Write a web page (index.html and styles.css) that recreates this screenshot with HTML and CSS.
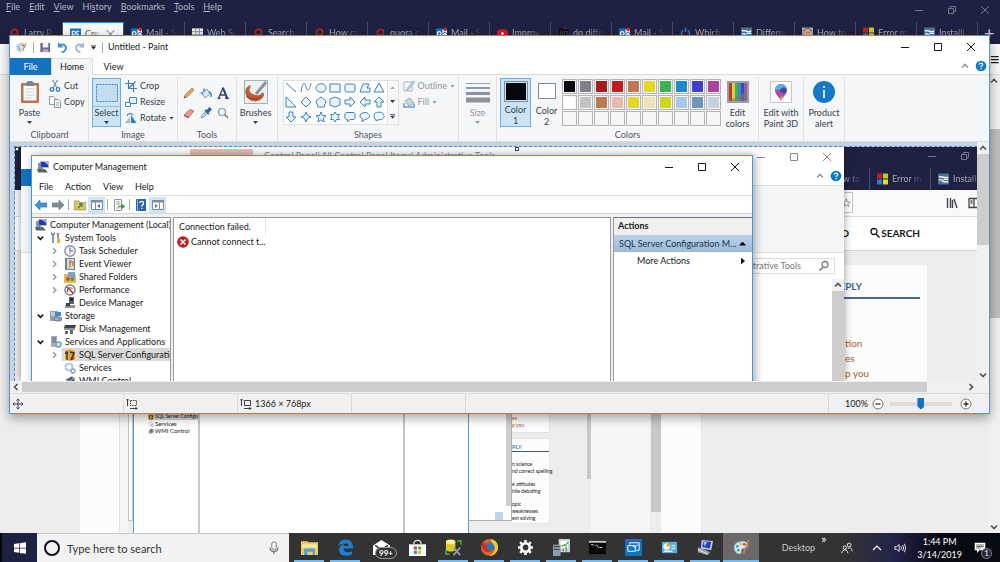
FILE: index.html
```html
<!DOCTYPE html>
<html lang="en">
<head>
  <meta charset="UTF-8" />
  <meta name="viewport" content="width=device-width, initial-scale=1.0"/>
  <title>Untitled - Paint</title>
  <link rel="stylesheet" href="styles.css">
</head>
<body>

<!-- Icon sprite -->
<svg class="sprite" aria-hidden="true">
  <symbol id="i-min" viewBox="0 0 12 12"><path d="M2 6.500h8" stroke="currentColor" fill="none"/></symbol>
  <symbol id="i-max" viewBox="0 0 12 12"><path d="M2.500 2.500h7v7h-7z" stroke="currentColor" fill="none"/></symbol>
  <symbol id="i-restore" viewBox="0 0 12 12"><path d="M2.500 4.500h5v5h-5zM4.500 4.500v-2h5v5h-2" stroke="currentColor" fill="none"/></symbol>
  <symbol id="i-close" viewBox="0 0 12 12"><path d="M2 2l8 8M10 2l-8 8" stroke="currentColor" fill="none"/></symbol>
  <symbol id="i-up" viewBox="0 0 12 12"><path d="M3 7.500l3-3 3 3" stroke="currentColor" stroke-width="1.600" fill="none"/></symbol>
  <symbol id="i-chevron" viewBox="0 0 12 12"><path d="M2 8l4-4 4 4" stroke="currentColor" stroke-width="1.200" fill="none"/></symbol>
  <symbol id="i-down" viewBox="0 0 12 12"><path d="M3 4.500l3 3 3-3" stroke="currentColor" stroke-width="1.600" fill="none"/></symbol>
  <symbol id="i-left" viewBox="0 0 12 12"><path d="M7.500 3l-3 3 3 3" stroke="currentColor" stroke-width="1.600" fill="none"/></symbol>
  <symbol id="i-right" viewBox="0 0 12 12"><path d="M4.500 3l3 3-3 3" stroke="currentColor" stroke-width="1.600" fill="none"/></symbol>
  <symbol id="i-help" viewBox="0 0 12 12"><circle cx="6" cy="6" r="5.300" fill="#1078c8"/><path d="M4.300 4.700C4.300 2.500 7.800 2.600 7.700 4.600 7.600 5.800 6 5.700 6 7.200M6 8.200v1.200" stroke="#fff" stroke-width="1.200" fill="none"/></symbol>
  <symbol id="i-q" viewBox="0 0 12 12"><circle cx="6" cy="5.500" r="3.500" stroke="#c8201e" stroke-width="1.600" fill="none"/><path d="M6 7l2.500 3.500" stroke="#c8201e" stroke-width="1.600"/></symbol>
  <symbol id="i-pe" viewBox="0 0 12 12"><path d="M0 0h12v12H0z" fill="#1578c4"/><path d="M2.500 10V3h2c2 0 2 3.200 0 3.200H2.500M10 3H7.500v7M7.500 6.300h2" stroke="#fff" stroke-width="1.200" fill="none"/></symbol>
  <symbol id="i-outlook" viewBox="0 0 12 12"><path d="M5 2h7v9H5z" fill="#dcecf8"/><path d="M0 1h7v11H0z" fill="#1272c0"/><circle cx="3.500" cy="6.500" r="2" stroke="#fff" stroke-width="1.200" fill="none"/><path d="M7 7l3-2 2 2M7 9h5" stroke="#1272c0" fill="none"/><circle cx="10" cy="2" r="2" fill="#d82020"/></symbol>
  <symbol id="i-sheet" viewBox="0 0 12 12"><path d="M0 1h12v11H0z" fill="#f0f0f4"/><path d="M4 1v11M8 1v11M0 4.500h12M0 8h12" stroke="#80829a"/></symbol>
  <symbol id="i-tube" viewBox="0 0 12 12"><rect y="2" width="12" height="9" rx="4" fill="#c81e1e"/><path d="M5 4.500l3 2-3 2z" fill="#fff"/></symbol>
  <symbol id="i-hq" viewBox="0 0 12 12"><path d="M1 1h10v11H1z" fill="#0b0b12"/><path d="M3 3v7M5 3v7M3 6h2M7 4h3v5H7z" stroke="#3c3c50" fill="none"/><path d="M6 1h4" stroke="#c02020"/></symbol>
  <symbol id="i-power" viewBox="0 0 12 12"><path d="M3.500 3a4.500 4.500 0 1 0 5 0M6 0v5" stroke="#2585cc" stroke-width="1.500" fill="none"/></symbol>
  <symbol id="i-swirl" viewBox="0 0 12 12"><path d="M0 0h12v12H0z" fill="#4d7399"/><path d="M1 4c4-2 5 2 10 0M1 7h3l2 2h5M6 6.500h5" stroke="#fff" stroke-width="1.400" fill="none"/></symbol>
  <symbol id="i-face" viewBox="0 0 12 12"><path d="M0 0h12v12H0z" fill="#a8a4a8"/><circle cx="6" cy="6" r="4" fill="#d8a088"/><path d="M2 4c1-4 7-4 8 0M4.500 5.500h1M7 5.500h1M4.500 8.500c1 1 2 1 3 0" stroke="#70442e" fill="none"/></symbol>
  <symbol id="i-blocks" viewBox="0 0 12 12"><path d="M0 0h5.500v5.500H0z" fill="#c81c1c"/><path d="M6.500 0H12v5.500H6.500z" fill="#b9cf20"/><path d="M0 6.500h5.500V12H0z" fill="#2080d0"/><path d="M6.500 6.500H12V12H6.500z" fill="#ecd722"/></symbol>
  <symbol id="i-palette" viewBox="0 0 16 16"><path d="M1 8c0-4 4-6 8-6 3 0 5 2 5 4s-2 3-4 3-2 1-2 2 0 3-2 3C3 14 1 11 1 8z" fill="#d8eaf6" stroke="#6fa0c4" stroke-width=".8"/><circle cx="4" cy="7" r="1.300" fill="#3f9ad8"/><circle cx="7" cy="4.500" r="1.300" fill="#e3b929"/><circle cx="10.500" cy="5" r="1.300" fill="#cf4a2c"/><circle cx="5" cy="10.500" r="1.300" fill="#44a860"/><path d="M15 1l-4 9-1 4" stroke="#c98648" stroke-width="1.400" fill="none"/></symbol>
  <symbol id="i-save" viewBox="0 0 12 12"><path d="M1 1h10v10H1z" fill="#66718e"/><path d="M3 1h6v5H3z" fill="#f4f4f8"/><path d="M3 8h6v3H3z" fill="#c8a0c0"/><path d="M1 1v10" stroke="#8d3f8a"/></symbol>
  <symbol id="i-undo" viewBox="0 0 12 12"><path d="M3.500 3.500c4-2 7 .5 6 4C9 9.500 7.500 11 5 11" stroke="#3c8dcf" stroke-width="2" fill="none"/><path d="M1 0v6h6z" fill="#3c8dcf"/></symbol>
  <symbol id="i-redo" viewBox="0 0 12 12"><path d="M8.500 3.500c-4-2-7 .5-6 4C3 9.500 4.500 11 7 11" stroke="#98b8d0" stroke-width="2" fill="none"/><path d="M11 0v6H5z" fill="#98b8d0"/></symbol>
  <symbol id="i-paste" viewBox="0 0 20 24"><rect x="1" y="3" width="18" height="20" rx="1" fill="#bd7449"/><path d="M3.500 5.500h13v15h-13z" fill="#fff"/><path d="M6 3l2-2h4l2 2v3H6z" fill="#7d8492"/><path d="M5.500 9h9M5.500 12h9M5.500 15h9M5.500 18h6" stroke="#bec8d6"/></symbol>
  <symbol id="i-cut" viewBox="0 0 12 12"><path d="M3.500 0l4.500 8M8.500 0L4 8" stroke="#8899ab" stroke-width="1.300"/><circle cx="3" cy="9.500" r="1.800" fill="none" stroke="#2f82c6" stroke-width="1.300"/><circle cx="9" cy="9.500" r="1.800" fill="none" stroke="#2f82c6" stroke-width="1.300"/></symbol>
  <symbol id="i-copy" viewBox="0 0 12 12"><path d="M.500.500h4l2 2v6h-6z" fill="#fff" stroke="#909aa8"/><path d="M5.500 3.500h4l2 2v6h-6z" fill="#fff" stroke="#8290a4"/><path d="M7 7h3M7 9h3" stroke="#78a6d0"/></symbol>
  <symbol id="i-select" viewBox="0 0 24 20"><path d="M1.500 1.500h21v17h-21z" fill="#c3dcf0" stroke="#3f86c2" stroke-dasharray="2 1"/></symbol>
  <symbol id="i-crop" viewBox="0 0 12 12"><path d="M3.500 0v8.500H12M0 3.500h8.500V12M3.500 8.500l7-7" stroke="#3d7fb8" stroke-width="1.200" fill="none"/></symbol>
  <symbol id="i-resize" viewBox="0 0 12 12"><path d="M4.500 1.500h7v6h-7z" fill="#e6f2fc" stroke="#3d84c0"/><path d="M.500 6.500h5v4h-5z" fill="#fff" stroke="#3d84c0"/></symbol>
  <symbol id="i-rotate" viewBox="0 0 12 12"><path d="M0 11l5-6v6z" fill="#a9b8c8"/><path d="M6 3l5.500 8H6z" fill="#2f7ebf"/><path d="M2 4c1-3 4-3 6-1" stroke="#3d84c0" stroke-width="1.200" fill="none"/></symbol>
  <symbol id="i-pencil" viewBox="0 0 12 12"><path d="M1 11l1-3 7-7 2 2-7 7z" fill="#e3ad5b" stroke="#9d6c32" stroke-width=".7"/><path d="M1 11l.500-1.500 1 1z" fill="#222"/></symbol>
  <symbol id="i-fill" viewBox="0 0 12 12"><path d="M2 6l5-4 3 5-5 4z" fill="#dbe6ef" stroke="#74889a" stroke-width=".8"/><path d="M4 5V1.500M9 5c2 0 2.500 2 2 5" stroke="#3c8fd0" stroke-width="1.500" fill="none"/><path d="M0 6l3-1v3z" fill="#3c8fd0"/></symbol>
  <symbol id="i-text" viewBox="0 0 12 12"><path d="M1.500 11.500L6 1l4.500 10.500M3.500 8h5M.500 11.500h3M8 11.500h4" stroke="#33425e" stroke-width="1.300" fill="none"/><path d="M6 1l4 10" stroke="#33425e" stroke-width="2"/></symbol>
  <symbol id="i-eraser" viewBox="0 0 12 12"><path d="M1 8l6-5.500 4 1.500-5 6z" fill="#e59a92" stroke="#a65c56" stroke-width=".7"/><path d="M1 8l5 2v1.500L1 9.500z" fill="#be5d57"/></symbol>
  <symbol id="i-picker" viewBox="0 0 12 12"><path d="M1 11l1-3 4-4 2 2-4 4z" fill="#b9d6ee" stroke="#6088aa" stroke-width=".7"/><path d="M5 3l4 4M6.500 4.500L9.500 1.500l1 1-3 3z" stroke="#2469a6" stroke-width="2"/></symbol>
  <symbol id="i-lens" viewBox="0 0 12 12"><circle cx="5" cy="5" r="3.500" fill="#eaf4fb" stroke="#8a98a6" stroke-width="1.200"/><path d="M7.500 7.500L11 11" stroke="#8d7466" stroke-width="1.600"/></symbol>
  <symbol id="i-brush" viewBox="0 0 24 24"><path d="M.500.500h23v23H.500z" fill="#eceff2" stroke="#a8aeb6"/><path d="M23 1L12 14" stroke="#7f93a8" stroke-width="3"/><path d="M20 1h3v3z" fill="#bfd4e6"/><path d="M7 5c-5 1-7 6-5 10 2 6 10 8 14 5 4-2 5-6 3-8-2 2-4 4-7 3-4-1-8-3-6-7z" fill="#b5623c"/><path d="M3 16c4 4 10 4 14 0" stroke="#c8281e" stroke-width="2" fill="none" stroke-dasharray="2 1"/></symbol>
  <symbol id="i-outline" viewBox="0 0 12 12"><path d="M1 2h8v9H1z" fill="none" stroke="#a9b8c7"/><path d="M3 10l7-9 2 1-7 8z" fill="#bcd0e2" stroke="#93a9bc" stroke-width=".7"/></symbol>
  <symbol id="i-bucket" viewBox="0 0 12 12"><path d="M2 5l5-3 4 5-5 3z" fill="#c9d8e6" stroke="#91a8bc"/><path d="M1 7v4h10V8" fill="none" stroke="#8fb1cf" stroke-width="2"/></symbol>
  <symbol id="i-lines" viewBox="0 0 24 22"><path d="M0 2.500h24" stroke="#8ea3b8"/><path d="M0 7h24" stroke="#8a9caf" stroke-width="2"/><path d="M0 12.500h24" stroke="#8b93a0" stroke-width="3"/><path d="M0 19h24" stroke="#8d939e" stroke-width="5"/></symbol>
  <symbol id="i-rainbow" viewBox="0 0 22 22"><path d="M0 0h22v22H0z" fill="#9a9fa6"/><path d="M2 2h3v18H2z" fill="#be3b32"/><path d="M5 2h3v18H5z" fill="#e5cf2e"/><path d="M8 2h3v18H8z" fill="#44b04f"/><path d="M11 2h3v18h-3z" fill="#2b8fd2"/><path d="M14 2h3v18h-3z" fill="#4546bd"/><path d="M17 2h3v18h-3z" fill="#a9529f"/><path d="M2 20c3-6 5 0 8-4s6-3 10-6v10z" fill="#7c7479" opacity=".6"/></symbol>
  <symbol id="i-paint3d" viewBox="0 0 22 22"><path d="M.500.500h21v21H.500z" fill="#fcfcfc" stroke="#c4c6ca"/><path d="M11 20C9 15 5 14 5 9a6 6 0 0 1 12 0c0 5-4 6-6 11z" fill="#b149a8"/><path d="M5 9a6 6 0 0 1 12 0c-3-3-5 2-8 0-2-1-3 1-4 0z" fill="#5aaee2"/><path d="M9 9l5-3 3 3-3 4z" fill="#394aa8"/><path d="M10 17l3-3-2 6z" fill="#e5b02c"/></symbol>
  <symbol id="i-info" viewBox="0 0 22 22"><circle cx="11" cy="11" r="11" fill="#1379c8"/><path d="M11 9v8M11 5v2" stroke="#fff" stroke-width="1.600"/></symbol>
  <symbol id="i-move" viewBox="0 0 12 12"><path d="M6 1v10M1 6h10M4.500 2.500L6 1l1.500 1.500M4.500 9.500L6 11l1.500-1.500M2.500 4.500L1 6l1.500 1.500M9.500 4.500L11 6 9.500 7.500" stroke="#3a4250" fill="none"/></symbol>
  <symbol id="i-sel-size" viewBox="0 0 12 12"><path d="M1.500 1v7M0 2.500L1.500 1 3 2.500M4 10.500h7M9.500 9l1.500 1.500L9.500 12" stroke="#3a4250" fill="none"/><path d="M4.500 2.500h6v5h-6z" stroke="#3a4250" stroke-dasharray="1.500 .8" fill="none"/></symbol>
  <symbol id="i-img-size" viewBox="0 0 12 12"><path d="M1.500 1v7M0 2.500L1.500 1 3 2.500M4 10.500h7M9.500 9l1.500 1.500L9.500 12M4.500 2.500h6v5h-6z" stroke="#3a4250" fill="none"/></symbol>
  <symbol id="i-minus" viewBox="0 0 12 12"><circle cx="6" cy="6" r="5" fill="#fafafa" stroke="#777"/><path d="M3.500 6h5" stroke="#333" stroke-width="1.300"/></symbol>
  <symbol id="i-plus" viewBox="0 0 12 12"><circle cx="6" cy="6" r="5" fill="#fafafa" stroke="#777"/><path d="M3.500 6h5M6 3.500v5" stroke="#333" stroke-width="1.300"/></symbol>

  <!-- Shape gallery -->
  <symbol id="s-line" viewBox="0 0 12 12"><path d="M1 1l10 9"/></symbol>
  <symbol id="s-curve" viewBox="0 0 12 12"><path d="M1 10c2-12 4-9 5-5s3 5 5-4" fill="none"/></symbol>
  <symbol id="s-oval" viewBox="0 0 12 12"><ellipse cx="6" cy="6" rx="5" ry="4.300"/></symbol>
  <symbol id="s-rect" viewBox="0 0 12 12"><path d="M1 2h10v8H1z"/></symbol>
  <symbol id="s-round" viewBox="0 0 12 12"><rect x="1" y="2" width="10" height="8" rx="2"/></symbol>
  <symbol id="s-poly" viewBox="0 0 12 12"><path d="M1 10l3-8h6L8 6h3v4z"/></symbol>
  <symbol id="s-tri" viewBox="0 0 12 12"><path d="M6 1l5 9H1z"/></symbol>
  <symbol id="s-rtri" viewBox="0 0 12 12"><path d="M1 1l10 10H1z"/></symbol>
  <symbol id="s-diamond" viewBox="0 0 12 12"><path d="M6 1l5 5-5 5-5-5z"/></symbol>
  <symbol id="s-pent" viewBox="0 0 12 12"><path d="M6 1l5 4-2 6H3L1 5z"/></symbol>
  <symbol id="s-hex" viewBox="0 0 12 12"><path d="M6 1l5 2v6l-5 2-5-2V3z"/></symbol>
  <symbol id="s-right" viewBox="0 0 12 12"><path d="M1 4h5V1l5 5-5 5V8H1z"/></symbol>
  <symbol id="s-left" viewBox="0 0 12 12"><path d="M11 4H6V1L1 6l5 5V8h5z"/></symbol>
  <symbol id="s-up" viewBox="0 0 12 12"><path d="M4 11V6H1l5-5 5 5H8v5z"/></symbol>
  <symbol id="s-down" viewBox="0 0 12 12"><path d="M4 1v5H1l5 5 5-5H8V1z"/></symbol>
  <symbol id="s-star4" viewBox="0 0 12 12"><path d="M6 1l1.500 3.500L11 6 7.500 7.500 6 11 4.500 7.500 1 6l3.500-1.500z"/></symbol>
  <symbol id="s-star5" viewBox="0 0 12 12"><path d="M6 1l1.400 3.500L11 4.700 8.300 7l.9 4L6 8.800 2.800 11l.9-4L1 4.700l3.600-.2z"/></symbol>
  <symbol id="s-star6" viewBox="0 0 12 12"><path d="M6 1l1.500 2.500h3L9 6l1.500 2.500h-3L6 11 4.500 8.500h-3L3 6 1.500 3.500h3z"/></symbol>
  <symbol id="s-call1" viewBox="0 0 12 12"><path d="M2 1.500h8l1 1v5l-1 1H6L3.500 11V8.500H2l-1-1v-5z"/></symbol>
  <symbol id="s-call2" viewBox="0 0 12 12"><path d="M3 11l.500-3C-1 6 1 1.500 6 1.500S13 7.500 6 8.500z"/></symbol>
  <symbol id="s-call3" viewBox="0 0 12 12"><path d="M3 2c1-1 3-1 3-.5C8 .5 10 2 10 3c2 2 1 4-.5 4.500C9 9 7 9 6 8.500L3 10V8.500C1 8 .500 6 1.500 5 .500 4 1 2 3 2z"/></symbol>

  <!-- Computer Management icons -->
  <symbol id="c-mgmt" viewBox="0 0 12 12"><path d="M3 0h9v7H3z" fill="#aeb8c4"/><path d="M4 1h7v5H4z" fill="#2536b8"/><path d="M7 1h4v3z" fill="#8db2ea"/><path d="M1 2h3v6H1z" fill="#88949f"/><path d="M0 8h8l3 3.500H1z" fill="#59626d"/><path d="M4 6l2 3" stroke="#47a06c" stroke-width="1.500"/></symbol>
  <symbol id="c-tools" viewBox="0 0 12 12"><path d="M3 1v10M8 1v5" stroke="#8998a6" stroke-width="2"/><path d="M1.500 0v3h3V0M6.500 1.500h3" stroke="#8998a6" fill="none"/><path d="M8.500 6v5" stroke="#dfb62e" stroke-width="3"/></symbol>
  <symbol id="c-clock" viewBox="0 0 12 12"><circle cx="6" cy="6" r="5.200" fill="#eef4f9" stroke="#8c929a" stroke-width="1.400"/><path d="M6 2.500V6h3" stroke="#426a94" fill="none"/><path d="M6 6v3.500" stroke="#cc9d56"/></symbol>
  <symbol id="c-event" viewBox="0 0 12 12"><path d="M1 0h10v12H1z" fill="#5f83a9"/><path d="M3 1h7v10H3z" fill="#cfdeea"/><path d="M6 9V3l3 1v4" stroke="#cb792a" stroke-width="1.500" fill="none"/><circle cx="5.500" cy="9" r="1.400" fill="#e5b634"/></symbol>
  <symbol id="c-folder" viewBox="0 0 12 12"><path d="M0 3h5l1 1h6v8H0z" fill="#e2bb4e"/><path d="M4 1h7v5H4z" fill="#7da2cc"/><circle cx="4" cy="8" r="2" fill="#bb5237"/><circle cx="8.500" cy="8" r="2" fill="#4b9a57"/></symbol>
  <symbol id="c-perf" viewBox="0 0 12 12"><circle cx="6" cy="6" r="5" fill="#fff" stroke="#7c838a" stroke-width="1.500"/><path d="M3 3l6 6" stroke="#c8241e" stroke-width="1.600"/><path d="M3.500 8c-1-3 3-6 5-3" stroke="#444" fill="none"/></symbol>
  <symbol id="c-device" viewBox="0 0 12 12"><path d="M5 0h5v7H5z" fill="#59636f"/><path d="M6 1h3v3H6z" fill="#232c3c"/><path d="M1 8h10v3H1z" fill="#8b939c"/><path d="M2 6h4v3H2z" fill="#3a4350"/></symbol>
  <symbol id="c-storage" viewBox="0 0 12 12"><path d="M0 1h8v10H0z" fill="#91a0ae"/><path d="M1 3h5M1 5h5" stroke="#eef2f5"/><path d="M5 2h6v4H5z" fill="#3c8cc8"/><ellipse cx="8" cy="9" rx="4" ry="2" fill="#a9b9c5" stroke="#617584"/><circle cx="9" cy="9" r="1" fill="#48a958"/></symbol>
  <symbol id="c-disk" viewBox="0 0 12 12"><path d="M1 2h11l-1 3H0z" fill="#3c434c"/><path d="M0 5h11v2H0z" fill="#8a929a"/><path d="M1 8h3v3H1zM6 7h3v4H6z" fill="#636c76"/></symbol>
  <symbol id="c-server" viewBox="0 0 12 12"><path d="M1 0h6v11H1z" fill="#a4b0bb"/><path d="M2 2h4M2 4h4M2 6h4" stroke="#5f6c79"/><circle cx="8.500" cy="8.500" r="2.500" fill="#dceaf4" stroke="#6c9cc4" stroke-width="1.400"/></symbol>
  <symbol id="c-sql" viewBox="0 0 12 12"><path d="M1 2l5-2 5 2v8l-5 2-5-2z" fill="#e3ac28"/><path d="M3 2v9M1 4h3" stroke="#32343c" stroke-width="1.300"/><path d="M6 3l4 1-3 7" stroke="#282b35" stroke-width="1.600" fill="none"/><path d="M9 6v5" stroke="#b62b22" stroke-width="1.600"/></symbol>
  <symbol id="c-gear" viewBox="0 0 12 12"><circle cx="5" cy="5" r="3.500" fill="none" stroke="#9ab9d2" stroke-width="2" stroke-dasharray="2 .6"/><circle cx="9" cy="9" r="2" fill="none" stroke="#80aacb" stroke-width="1.500"/></symbol>
  <symbol id="c-wmi" viewBox="0 0 12 12"><path d="M2 4l6-3 3 2v6l-6 3-4-3z" fill="#9099a3"/><path d="M4 5l4-2M5 8l5-3" stroke="#444d58" stroke-width="1.500"/></symbol>
  <symbol id="c-back" viewBox="0 0 12 12"><path d="M0 6l5-5v3h7v4H5v3z" fill="#3e97d8" stroke="#28689e" stroke-width=".6"/></symbol>
  <symbol id="c-fwd" viewBox="0 0 12 12"><path d="M12 6L7 1v3H0v4h7v3z" fill="#858c94" stroke="#6c7278" stroke-width=".6"/></symbol>
  <symbol id="c-upfolder" viewBox="0 0 12 12"><path d="M0 2h5l1 1.500h6V11H0z" fill="#dfc36a" stroke="#9c8848" stroke-width=".7"/><path d="M4 9l4-4M5 5h3v3" stroke="#38913e" stroke-width="1.300" fill="none"/></symbol>
  <symbol id="c-pane" viewBox="0 0 12 12"><path d="M.500 1.500h11v9H.500z" fill="#fff" stroke="#7e8ca0"/><path d="M0 2.500h12" stroke="#7e8ca0" stroke-width="2"/><path d="M4.500 3v7" stroke="#7e8ca0"/><path d="M9 5v4L6 7z" fill="#4c6c9c"/></symbol>
  <symbol id="c-pane2" viewBox="0 0 12 12"><path d="M.500 1.500h11v9H.500z" fill="#fff" stroke="#7e8ca0"/><path d="M0 2.500h12" stroke="#7e8ca0" stroke-width="2"/><path d="M7.500 3v7" stroke="#7e8ca0"/><path d="M3 5v4l3-2z" fill="#329b42"/></symbol>
  <symbol id="c-export" viewBox="0 0 12 12"><path d="M1.500.500h7v11h-7z" fill="#fff" stroke="#9097a0"/><path d="M3 3h4M3 5h4M3 9h3" stroke="#98a0aa"/><path d="M5 7.500h5M8.500 5.500l2.500 2-2.500 2" stroke="#3c9c40" stroke-width="1.500" fill="none"/></symbol>
  <symbol id="c-book" viewBox="0 0 12 12"><path d="M1 0h10v12H1z" fill="#2a62ac"/><path d="M2.500 0v12" stroke="#8fb2dc"/><path d="M4.800 4C5 1.500 9 2 8.500 4.300 8.300 5.800 6.800 5.600 6.800 7.500M6.800 8.700v1.300" stroke="#fff" stroke-width="1.300" fill="none"/></symbol>
  <symbol id="c-error" viewBox="0 0 12 12"><circle cx="6" cy="6" r="5.800" fill="#bd1f1c"/><path d="M3.500 3.500l5 5M8.500 3.500l-5 5" stroke="#fff" stroke-width="1.600"/></symbol>
  <symbol id="c-find" viewBox="0 0 12 12"><circle cx="7" cy="4.500" r="3" fill="none" stroke="currentColor" stroke-width="1.300"/><path d="M5 7l-3.500 3.500" stroke="currentColor" stroke-width="1.600"/></symbol>

  <!-- Taskbar icons -->
  <symbol id="t-win" viewBox="0 0 12 12"><path d="M0 2l5-.7v4.400H0zM5.700 1.200L12 .3v5.400H5.700zM0 6.400h5v4.400L0 10zM5.700 6.400H12v5.400l-6.300-.9z" fill="#fff"/></symbol>
  <symbol id="t-mic" viewBox="0 0 12 16"><rect x="3.500" y="1" width="5" height="9" rx="2.500" fill="#fff" stroke="#666"/><path d="M1.500 7.500c0 6 9 6 9 0M6 12v3" fill="none" stroke="#666" stroke-width="1.300"/></symbol>
  <symbol id="t-explorer" viewBox="0 0 16 16"><path d="M0 2h6l1 1h9v12H0z" fill="#edcb65"/><path d="M1 5h14v3H1z" fill="#fae8a4"/><path d="M3 15V9h10v6h-2v-3H6v3z" fill="#4b9fdb"/></symbol>
  <symbol id="t-edge" viewBox="0 0 16 16"><path d="M1 7C2 2 5 .500 8.500.500 13 .500 15 4 15 7v2H6c.2 4 5 4 8 2.500v3C8 17 1.500 15.500 2 10c.2-3 3-5.500 5-6-3 .3-5 1.500-6 3zm5-.500h5C10.800 3.200 6.500 3.200 6 6.500z" fill="#1b80d0"/></symbol>
  <symbol id="t-mail" viewBox="0 0 16 16"><path d="M0 6l8-5 8 5v9H0z" fill="#fff"/><path d="M2 6l6 4 6-4" stroke="#333" stroke-width="1.500" fill="none"/></symbol>
  <symbol id="t-store" viewBox="0 0 16 16"><path d="M0 5h16v11H0z" fill="#fff"/><path d="M4.500 5c0-5 7-5 7 0" fill="none" stroke="#ddd" stroke-width="1.300"/><path d="M4.500 7h3v3h-3z" fill="#d9412a"/><path d="M8.500 7h3v3h-3z" fill="#66ac36"/><path d="M4.500 11h3v3h-3z" fill="#2a90cf"/><path d="M8.500 11h3v3h-3z" fill="#e5b52a"/></symbol>
  <symbol id="t-sqlcfg" viewBox="0 0 18 18"><path d="M1 3v8c0 3 10 3 10 0V3z" fill="#e2c928"/><ellipse cx="6" cy="3" rx="5" ry="2.500" fill="#fff1a0"/><path d="M13 2h4v4M1 12v4h4" fill="none" stroke="#48a33c" stroke-width="1.800"/><path d="M9 9l7 8M16 9l-7 8" stroke="#9a9a9a" stroke-width="2"/></symbol>
  <symbol id="t-firefox" viewBox="0 0 16 16"><circle cx="8" cy="8" r="8" fill="#e0622a"/><path d="M9 0c5 1 7 4 7 8s-4 8-8 8c4-3 6-5 5-8-.5-3-3-3-4-8z" fill="#efd22e"/><circle cx="8.500" cy="7" r="4" fill="#2879bd"/><path d="M1 5c0 7 5 9 9 6-4 0-5-2-4-4L3 3z" fill="#c93025"/></symbol>
  <symbol id="t-gear" viewBox="0 0 16 16"><circle cx="8" cy="8" r="4" fill="none" stroke="#fff" stroke-width="2.500"/><path d="M8 1v2M8 13v2M1 8h2M13 8h2M3 3l1.500 1.500M11.500 11.500L13 13M3 13l1.500-1.500M11.500 4.500L13 3" stroke="#fff" stroke-width="2.400"/></symbol>
  <symbol id="t-server" viewBox="0 0 18 18"><path d="M6 0h12v14H6z" fill="#ccd2d8"/><path d="M8 2h8v8H8z" fill="#fff"/><path d="M9 8l3-2 1 1 3-4M11 10v3M14 8v5" stroke="#38a34b" stroke-width="1.300" fill="none"/><path d="M0 6h8v12H0z" fill="#909aa5"/><path d="M1 8h6M1 11h6" stroke="#333"/></symbol>
  <symbol id="t-cmd" viewBox="0 0 18 14"><path d="M0 0h18v14H0z" fill="#080808"/><path d="M0 1h18" stroke="#c6c9cc" stroke-width="2"/><path d="M2 4h3M6 5h1M8 4l2 3M11 7h3" stroke="#ddd"/></symbol>
  <symbol id="t-blue" viewBox="0 0 18 18"><path d="M0 0h18v18H0z" fill="#0f74c0"/><path d="M5 6V4h10v8h-3M3 7h8v6H3z" fill="none" stroke="#fff"/><path d="M8 7l2 2 4-3" fill="none" stroke="#fff"/></symbol>
  <symbol id="t-panel" viewBox="0 0 18 14"><path d="M1 1h16v12H1z" fill="#57aee0"/><circle cx="6" cy="6" r="3.500" fill="#fff"/><path d="M6 6V2.500A3.500 3.500 0 0 1 9.500 6z" fill="#e3a42e"/><path d="M11 5h4M11 8h4M3 11h9" stroke="#e8f5ff" stroke-width="1.400"/></symbol>
  <symbol id="t-pc" viewBox="0 0 18 18"><path d="M5 1l12 1-2 10-11-2z" fill="#bfcad5"/><path d="M7 2.500l8 .5-1.500 7-8-1.500z" fill="#253fc4"/><path d="M7 3l4 0-3 5z" fill="#a1c4ef"/><path d="M1 9l4 1 9 4-3 3-10-3z" fill="#99a5b3"/><path d="M1 11l10 5" stroke="#e5eaf0"/></symbol>
  <symbol id="t-people" viewBox="0 0 14 14"><circle cx="9.500" cy="3.500" r="2.200" fill="none" stroke="#fff"/><circle cx="4.500" cy="6.500" r="2" fill="none" stroke="#fff"/><path d="M1 13c0-5 7-5 7 0M8 8c3-3 5 0 5 3" fill="none" stroke="#fff"/></symbol>
  <symbol id="t-sound" viewBox="0 0 14 12"><path d="M1 4.500h2L6 2v8L3 7.500H1z" fill="none" stroke="#fff"/><path d="M8 4q1.500 2 0 4M10 2.500q2.500 3.500 0 7M12 1q3.500 5 0 10" stroke="#fff" fill="none"/></symbol>
  <symbol id="t-note" viewBox="0 0 16 16"><path d="M1 1h14v10H7l-3 4v-4H1z" fill="#fff"/><path d="M3 4h10M3 6h10M3 8h6" stroke="#333"/></symbol>
</svg>

<!-- Desktop -->
<main class="desktop">

  <!-- Firefox in the background -->
  <section class="browser">
    <div class="browser-menu">
      <nav>
        <a href="#"><u>F</u>ile</a><a href="#"><u>E</u>dit</a><a href="#"><u>V</u>iew</a><a href="#">Hi<u>s</u>tory</a><a href="#"><u>B</u>ookmarks</a><a href="#"><u>T</u>ools</a><a href="#"><u>H</u>elp</a>
      </nav>
      <div class="browser-controls">
        <svg><use href="#i-min"/></svg><svg><use href="#i-restore"/></svg><svg><use href="#i-close"/></svg>
      </div>
    </div>
    <div class="tabs">
      <a class="tab" href="#"><svg><use href="#i-q"/></svg><span>Larry P</span></a>
      <a class="tab active" href="#"><svg><use href="#i-pe"/></svg><span>Creat</span><svg class="tab-x"><use href="#i-close"/></svg></a>
      <a class="tab" href="#"><svg><use href="#i-outlook"/></svg><span>Mail - S</span></a>
      <a class="tab" href="#"><svg><use href="#i-sheet"/></svg><span>Web Sc</span></a>
      <a class="tab" href="#"><svg><use href="#i-q"/></svg><span>Search</span></a>
      <a class="tab" href="#"><svg><use href="#i-q"/></svg><span>How ca</span></a>
      <a class="tab" href="#"><svg><use href="#i-q"/></svg><span>quora c</span></a>
      <a class="tab" href="#"><svg><use href="#i-outlook"/></svg><span>Mail - S</span></a>
      <a class="tab" href="#"><svg><use href="#i-tube"/></svg><span>Improv</span></a>
      <a class="tab" href="#"><svg><use href="#i-hq"/></svg><span>dq diffe</span></a>
      <a class="tab" href="#"><svg><use href="#i-outlook"/></svg><span>Mail - S</span></a>
      <a class="tab" href="#"><svg><use href="#i-power"/></svg><span>Which</span></a>
      <a class="tab" href="#"><svg><use href="#i-swirl"/></svg><span>Differen</span></a>
      <a class="tab" href="#"><svg><use href="#i-face"/></svg><span>How to</span></a>
      <a class="tab" href="#"><svg><use href="#i-blocks"/></svg><span>Error m</span></a>
      <a class="tab" href="#"><svg><use href="#i-swirl"/></svg><span>Installi</span></a>
      <button class="new-tab" aria-label="New tab">+</button>
    </div>
    <div class="browser-bar"><span>≡</span></div>
    <div class="browser-page">
      <div class="page-content">
        <div class="col gutter"></div>
        <div class="col sheet"></div>
        <div class="col ribbon-edge"></div>
        <div class="col old-window"></div>
        <div class="col mini-tree">
          <p class="mini-selected"><svg><use href="#c-sql"/></svg>SQL Server Configuratio</p>
          <p><svg><use href="#c-gear"/></svg>Services</p>
          <p><svg><use href="#c-wmi"/></svg>WMI Control</p>
        </div>
        <div class="col mini-list"></div>
        <div class="col mini-actions"></div>
        <div class="col mini-explorer"><div class="mini-scroll"></div><div class="mini-view"></div></div>
        <div class="col mini-site">
          <div class="mini-card short"><p class="rust">es</p><p class="rust">p you</p></div>
          <div class="mini-card">
            <h3>PLY</h3>
            <p>n science</p><p>nd correct spelling</p>
            <p class="gap">e attitudes</p><p>hile debating</p>
            <p class="gap">opic</p><p>weaknesses</p><p>em solving</p>
          </div>
        </div>
        <div class="col mini-bar"></div>
        <div class="col pale"></div>
        <div class="col mini-bar wide"></div>
        <div class="col sheet last"></div>
      </div>
      <div class="scrollbar page-scroll">
        <svg><use href="#i-up"/></svg>
        <div class="track"><div class="thumb"></div></div>
        <svg><use href="#i-down"/></svg>
      </div>
    </div>
  </section>

  <!-- Paint -->
  <section class="paint">
    <header class="titlebar">
      <div class="quick">
        <svg class="app"><use href="#i-palette"/></svg><i></i>
        <button aria-label="Save"><svg><use href="#i-save"/></svg></button>
        <button aria-label="Undo"><svg><use href="#i-undo"/></svg></button>
        <button aria-label="Redo"><svg><use href="#i-redo"/></svg></button>
        <button class="caret bar" aria-label="Customize"></button><i></i>
      </div>
      <h1>Untitled - Paint</h1>
      <div class="controls">
        <button aria-label="Minimize"><svg><use href="#i-min"/></svg></button>
        <button aria-label="Maximize"><svg><use href="#i-max"/></svg></button>
        <button aria-label="Close"><svg><use href="#i-close"/></svg></button>
      </div>
    </header>

    <nav class="ribbon-tabs">
      <a class="file" href="#">File</a>
      <a class="current" href="#">Home</a>
      <a href="#">View</a>
      <span class="ribbon-help"><svg class="faint"><use href="#i-up"/></svg><svg><use href="#i-help"/></svg></span>
    </nav>

    <div class="ribbon">
      <div class="group clipboard">
        <div class="tools-row">
          <button class="big"><svg class="icon-paste"><use href="#i-paste"/></svg>Paste<b class="caret"></b></button>
          <div class="stack">
            <button><svg><use href="#i-cut"/></svg>Cut</button>
            <button><svg><use href="#i-copy"/></svg>Copy</button>
          </div>
        </div>
        <h2>Clipboard</h2>
      </div>
      <div class="group image">
        <div class="tools-row">
          <button class="big pressed split"><svg class="icon-select"><use href="#i-select"/></svg><span>Select</span><b class="caret"></b></button>
          <div class="stack">
            <button><svg><use href="#i-crop"/></svg>Crop</button>
            <button><svg><use href="#i-resize"/></svg>Resize</button>
            <button><svg><use href="#i-rotate"/></svg>Rotate<b class="caret"></b></button>
          </div>
        </div>
        <h2>Image</h2>
      </div>
      <div class="group tools">
        <div class="tool-grid">
          <button aria-label="Pencil"><svg><use href="#i-pencil"/></svg></button>
          <button aria-label="Fill with color"><svg><use href="#i-fill"/></svg></button>
          <button aria-label="Text"><svg><use href="#i-text"/></svg></button>
          <button aria-label="Eraser"><svg><use href="#i-eraser"/></svg></button>
          <button aria-label="Color picker"><svg><use href="#i-picker"/></svg></button>
          <button aria-label="Magnifier"><svg><use href="#i-lens"/></svg></button>
        </div>
        <h2>Tools</h2>
      </div>
      <div class="group brushes">
        <div class="tools-row"><button class="big"><svg class="icon-brush"><use href="#i-brush"/></svg>Brushes<b class="caret"></b></button></div>
      </div>
      <div class="group shapes">
        <div class="tools-row">
          <div class="gallery">
            <div class="shape-grid">
              <svg><use href="#s-line"/></svg><svg><use href="#s-curve"/></svg><svg><use href="#s-oval"/></svg><svg><use href="#s-rect"/></svg><svg><use href="#s-round"/></svg><svg><use href="#s-poly"/></svg><svg><use href="#s-tri"/></svg>
              <svg><use href="#s-rtri"/></svg><svg><use href="#s-diamond"/></svg><svg><use href="#s-pent"/></svg><svg><use href="#s-hex"/></svg><svg><use href="#s-right"/></svg><svg><use href="#s-left"/></svg><svg><use href="#s-up"/></svg>
              <svg><use href="#s-down"/></svg><svg><use href="#s-star4"/></svg><svg><use href="#s-star5"/></svg><svg><use href="#s-star6"/></svg><svg><use href="#s-call1"/></svg><svg><use href="#s-call2"/></svg><svg><use href="#s-call3"/></svg>
            </div>
            <div class="gallery-scroll">
              <button class="caret up" aria-label="Scroll up"></button>
              <button class="caret" aria-label="Scroll down"></button>
              <button class="caret bar" aria-label="More shapes"></button>
            </div>
          </div>
          <div class="stack">
            <button disabled><svg><use href="#i-outline"/></svg>Outline<b class="caret"></b></button>
            <button disabled><svg><use href="#i-bucket"/></svg>Fill<b class="caret"></b></button>
          </div>
        </div>
        <h2>Shapes</h2>
      </div>
      <div class="group size">
        <div class="tools-row"><button class="big" disabled><svg class="icon-brush"><use href="#i-lines"/></svg>Size<b class="caret"></b></button></div>
      </div>
      <div class="group colors">
        <div class="tools-row">
          <button class="big pressed"><span class="chip black"></span>Color<br>1</button>
          <button class="big"><span class="chip white"></span>Color<br>2</button>
          <div class="swatches" id="swatches"></div>
          <button class="big"><svg class="icon-med"><use href="#i-rainbow"/></svg>Edit<br>colors</button>
        </div>
        <h2>Colors</h2>
      </div>
      <div class="group paint3d">
        <div class="tools-row"><button class="big"><svg class="icon-med"><use href="#i-paint3d"/></svg>Edit with<br>Paint 3D</button></div>
      </div>
      <div class="group alert">
        <div class="tools-row"><button class="big"><svg class="icon-med"><use href="#i-info"/></svg>Product<br>alert</button></div>
      </div>
    </div>

    <div class="workspace">
      <div class="canvas">
        <span class="handle corner"></span><span class="handle middle"></span>

        <!-- Browser pasted on the canvas -->
        <div class="pasted-browser">
          <div class="pasted-top">
            <div class="browser-controls"><svg><use href="#i-min"/></svg><svg><use href="#i-restore"/></svg></div>
            <div class="pasted-tabs">
              <a class="tab" href="#"><svg><use href="#i-face"/></svg><span>How to</span></a>
              <a class="tab" href="#"><svg><use href="#i-blocks"/></svg><span>Error m</span></a>
              <a class="tab" href="#"><svg><use href="#i-swirl"/></svg><span>Installi</span></a>
            </div>
          </div>
          <div class="pasted-bar">
            <span class="url">☆</span>
            <svg viewBox="0 0 12 12"><path d="M1.500 1v10M4.500 1v10M6.500 3v8M8 2l3 9" stroke="#45454d" stroke-width="1.400" fill="none"/></svg>
            <svg viewBox="0 0 12 12"><path d="M1 1.500h13v9H1zM6 1v10M2.500 4h2M2.500 6h2" stroke="#45454d" stroke-width="1.300" fill="none"/></svg>
          </div>
          <div class="pasted-head"><span>O</span><svg><use href="#c-find"/></svg><span>SEARCH</span></div>
          <div class="pasted-page">
            <div class="pasted-card">
              <h3>REPLY</h3>
              <p>tion</p><p>es</p><p>p you</p>
            </div>
          </div>
        </div>

        <!-- Explorer pasted on the canvas -->
        <div class="pasted-explorer">
          <div class="explorer-top">
            <span class="manage"></span>
            <span class="path">Control Panel\All Control Panel Items\Administrative Tools</span>
            <div class="controls"><svg><use href="#i-min"/></svg><svg><use href="#i-max"/></svg><svg><use href="#i-close"/></svg></div>
          </div>
          <div class="explorer-tabs"><span class="file"></span><span class="ribbon-help"><svg class="faint"><use href="#i-up"/></svg><svg><use href="#i-help"/></svg></span></div>
          <div class="explorer-ribbon"></div>
          <div class="explorer-address"><label>Search Administrative Tools<svg><use href="#c-find"/></svg></label></div>
          <div class="explorer-body"><div class="scrollbar"><svg><use href="#i-up"/></svg><div class="thumb"></div></div></div>
        </div>

        <!-- Computer Management pasted on the canvas -->
        <div class="manager">
          <header class="titlebar">
            <svg class="app"><use href="#c-mgmt"/></svg>
            <h1>Computer Management</h1>
            <div class="controls">
              <button aria-label="Minimize"><svg><use href="#i-min"/></svg></button>
              <button aria-label="Maximize"><svg><use href="#i-max"/></svg></button>
              <button aria-label="Close"><svg><use href="#i-close"/></svg></button>
            </div>
          </header>
          <nav class="manager-menu"><a href="#">File</a><a href="#">Action</a><a href="#">View</a><a href="#">Help</a></nav>
          <div class="manager-tools">
            <button aria-label="Back"><svg><use href="#c-back"/></svg></button>
            <button aria-label="Forward"><svg><use href="#c-fwd"/></svg></button><i></i>
            <button aria-label="Up"><svg><use href="#c-upfolder"/></svg></button>
            <button class="on" aria-label="Show tree"><svg><use href="#c-pane"/></svg></button><i></i>
            <button aria-label="Export"><svg><use href="#c-export"/></svg></button><i></i>
            <button aria-label="Help"><svg><use href="#c-book"/></svg></button>
            <button class="on" aria-label="Show actions"><svg><use href="#c-pane2"/></svg></button>
          </div>
          <div class="panes">
            <ul class="tree">
              <li class="root"><svg><use href="#c-mgmt"/></svg><span>Computer Management (Local)</span></li>
              <li><svg class="arrow"><use href="#i-down"/></svg><svg><use href="#c-tools"/></svg><span>System Tools</span></li>
              <li class="child"><svg class="arrow grey"><use href="#i-right"/></svg><svg><use href="#c-clock"/></svg><span>Task Scheduler</span></li>
              <li class="child"><svg class="arrow grey"><use href="#i-right"/></svg><svg><use href="#c-event"/></svg><span>Event Viewer</span></li>
              <li class="child"><svg class="arrow grey"><use href="#i-right"/></svg><svg><use href="#c-folder"/></svg><span>Shared Folders</span></li>
              <li class="child"><svg class="arrow grey"><use href="#i-right"/></svg><svg><use href="#c-perf"/></svg><span>Performance</span></li>
              <li class="child"><svg class="arrow"></svg><svg><use href="#c-device"/></svg><span>Device Manager</span></li>
              <li><svg class="arrow"><use href="#i-down"/></svg><svg><use href="#c-storage"/></svg><span>Storage</span></li>
              <li class="child"><svg class="arrow"></svg><svg><use href="#c-disk"/></svg><span>Disk Management</span></li>
              <li><svg class="arrow"><use href="#i-down"/></svg><svg><use href="#c-server"/></svg><span>Services and Applications</span></li>
              <li class="child selected"><svg class="arrow grey"><use href="#i-right"/></svg><svg><use href="#c-sql"/></svg><span>SQL Server Configuration</span></li>
              <li class="child"><svg class="arrow"></svg><svg><use href="#c-gear"/></svg><span>Services</span></li>
              <li class="child"><svg class="arrow"></svg><svg><use href="#c-wmi"/></svg><span>WMI Control</span></li>
            </ul>
            <div class="list">
              <div class="list-head">Connection failed.</div>
              <div class="list-row"><svg><use href="#c-error"/></svg>Cannot connect t...</div>
            </div>
            <aside class="actions">
              <h2>Actions</h2>
              <div class="action-title">SQL Server Configuration M...<b class="caret up"></b></div>
              <a href="#">More Actions<b class="caret side"></b></a>
            </aside>
          </div>
        </div>
      </div>
      <div class="scrollbar vertical">
        <svg><use href="#i-up"/></svg>
        <div class="track"><div class="thumb"></div></div>
        <svg><use href="#i-down"/></svg>
      </div>
    </div>
    <div class="scrollbar horizontal">
      <svg><use href="#i-left"/></svg>
      <div class="track"><div class="thumb"></div></div>
      <svg><use href="#i-right"/></svg>
    </div>

    <footer class="status">
      <span class="cell"><svg><use href="#i-move"/></svg></span>
      <span class="cell"><svg><use href="#i-sel-size"/></svg></span>
      <span class="cell"><svg><use href="#i-img-size"/></svg>1366 × 768px</span>
      <span class="cell"></span>
      <div class="zoom">
        <label for="zoom">100%</label>
        <button aria-label="Zoom out"><svg><use href="#i-minus"/></svg></button>
        <input type="range" id="zoom" min="0" max="100" value="50">
        <button aria-label="Zoom in"><svg><use href="#i-plus"/></svg></button>
      </div>
    </footer>
  </section>
</main>

<!-- Taskbar -->
<footer class="taskbar">
  <button class="start" aria-label="Start"><svg><use href="#t-win"/></svg></button>
  <div class="search">
    <span class="cortana"></span>
    <input type="text" placeholder="Type here to search" aria-label="Search">
    <svg><use href="#t-mic"/></svg>
  </div>
  <div class="apps">
    <button class="open" aria-label="File Explorer"><svg><use href="#t-explorer"/></svg></button>
    <button class="open" aria-label="Edge"><svg><use href="#t-edge"/></svg></button>
    <button aria-label="Mail"><svg><use href="#t-mail"/></svg><span class="badge">99+</span></button>
    <button aria-label="Store"><svg><use href="#t-store"/></svg></button>
    <button class="open" aria-label="SQL configuration"><svg><use href="#t-sqlcfg"/></svg></button>
    <button class="open" aria-label="Firefox"><svg><use href="#t-firefox"/></svg></button>
    <button class="open" aria-label="Settings"><svg><use href="#t-gear"/></svg></button>
    <button class="open" aria-label="Server"><svg><use href="#t-server"/></svg></button>
    <button class="open" aria-label="Command Prompt"><svg><use href="#t-cmd"/></svg></button>
    <button class="open" aria-label="Remote"><svg><use href="#t-blue"/></svg></button>
    <button class="open" aria-label="Control Panel"><svg><use href="#t-panel"/></svg></button>
    <button class="open" aria-label="Computer Management"><svg><use href="#t-pc"/></svg></button>
    <button class="open active" aria-label="Paint"><svg><use href="#i-palette"/></svg></button>
  </div>
  <div class="tray">
    <span class="desk">Desktop</span><span class="more">»</span>
    <svg class="people"><use href="#t-people"/></svg>
    <svg><use href="#i-chevron"/></svg>
    <svg><use href="#t-sound"/></svg>
    <div class="clock">1:44 PM<br>3/14/2019</div>
    <div class="notes"><svg><use href="#t-note"/></svg><span>1</span></div>
  </div>
</footer>

<script>
  const colors = [
    "#0a0b12", "#7f8088", "#a31c20", "#c01c1c", "#bd7850", "#e6d81a", "#38b54a", "#2088cc", "#4040cc", "#b040a0",
    "#ffffff", "#c3c3c3", "#bd7850", "#e8baac", "#e6d81a", "#efe2b4", "#cfd622", "#a8c8e4", "#7094bc", "#c6d2e4"
  ];
  const swatches = document.getElementById("swatches");

  for (let i = 0; i < 30; i++) {
    const swatch = document.createElement("button");
    swatch.setAttribute("aria-label", "Color " + (i + 1));
    if (colors[i]) {
      swatch.style.background = colors[i];
    }
    swatches.appendChild(swatch);
  }
</script>

</body>
</html>
```
FILE: styles.css
```css
* {
  box-sizing: border-box;
}

body {
  margin: 0;
  height: 100vh;
  display: flex;
  flex-direction: column;
  overflow: hidden;
  font-family: Lato, "Open Sans", sans-serif;
  font-size: 9px;
  line-height: 12px;
  color: #181818;
}

button {
  border: none;
  background: none;
  padding: 0;
  font: inherit;
  color: inherit;
}

a {
  color: inherit;
  text-decoration: none;
}

h1, h2, h3, p, ul {
  margin: 0;
  padding: 0;
  font-size: 9px;
  font-weight: normal;
  list-style: none;
}

svg {
  width: 12px;
  height: 12px;
  flex: none;
  display: block;
}

.sprite {
  position: absolute;
  width: 0;
  height: 0;
}

.desktop {
  flex: 1;
  position: relative;
  overflow: hidden;
}

/* Little arrows */
.caret {
  display: block;
  flex: none;
  width: 5px;
  height: 3px;
  background: currentColor;
  clip-path: polygon(0 0, 100% 0, 50% 100%);
}

.caret.up {
  clip-path: polygon(50% 0, 100% 100%, 0 100%);
}

.caret.bar {
  height: 5px;
  clip-path: polygon(0 0, 100% 0, 100% 20%, 0 20%, 0 40%, 100% 40%, 50% 100%, 0 40%);
}

.caret.side {
  width: 4px;
  height: 7px;
  clip-path: polygon(0 0, 100% 50%, 0 100%);
}

/* Scrollbars */
.scrollbar {
  display: flex;
  flex-direction: column;
  align-items: center;
  background: #f0f0f0;
  color: #505050;
  width: 12px;
}

.scrollbar .track {
  flex: 1;
  width: 100%;
}

.scrollbar .thumb {
  background: #cdcdcd;
  width: 100%;
}

/* Browser */
.browser {
  height: 100%;
  display: flex;
  flex-direction: column;
  background: #ededed;
}

.browser-menu {
  height: 22px;
  background: #1f2142;
  color: #b4b5c2;
  display: flex;
  justify-content: space-between;
  padding: 1px 9px 0 6px;
}

.browser-menu nav {
  display: flex;
  gap: 9px;
}

.browser-controls {
  display: flex;
  gap: 21px;
  padding-top: 3px;
  color: #77788c;
}

.tabs {
  height: 22px;
  background: #1f2142;
  display: flex;
  padding-left: 2px;
}

.tab {
  flex: 0 1 61px;
  height: 22px;
  display: flex;
  align-items: center;
  gap: 4px;
  padding: 0 7px;
  overflow: hidden;
  white-space: nowrap;
  color: #a6a7b6;
  border-right: 1px solid #484a66;
}

.tab svg {
  width: 11px;
}

.tab span {
  flex: 1;
  overflow: hidden;
  mask-image: linear-gradient(90deg, #000 50%, transparent);
}

.tab.active {
  background: #f8f8fa;
  color: #55565e;
  border-top: 1px solid #2a92e6;
}

.new-tab {
  color: #c8c8d2;
  font-size: 18px;
  padding-left: 6px;
}

.browser-bar {
  height: 31px;
  background: #f8f8fa;
  border-bottom: 1px solid #d8d8d8;
  text-align: right;
  font-size: 18px;
  line-height: 30px;
}

.browser-page {
  flex: 1;
  display: flex;
}

.page-content {
  flex: 1;
  display: flex;
  padding-top: 325px;
  overflow: hidden;
}

.page-scroll .thumb {
  margin-top: 42px;
  height: 189px;
  background: #bdbdbd;
}

.col {
  flex: none;
  background: #fff;
}

.gutter {
  width: 80px;
  background: #ededed;
}

.sheet {
  width: 40px;
  background: #fcfcfc;
  border-right: 1px solid #e2e2e2;
}

.ribbon-edge {
  width: 8px;
  background: #f4f5f7;
}

.old-window {
  width: 5px;
  margin-bottom: 12px;
  border: 1px solid #c4c4c4;
}

.mini-tree {
  width: 67px;
  padding-top: 13px;
  border-left: 1px solid #5c9ad0;
  border-right: 2px solid #c8c8c8;
}

.mini-tree p, .mini-site p {
  font-size: 6px;
  line-height: 7px;
  white-space: nowrap;
}

.mini-tree p {
  display: flex;
  align-items: center;
  gap: 1px;
  padding-left: 14px;
  overflow: hidden;
}

.mini-tree svg {
  width: 6px;
  height: 6px;
}

.mini-tree .mini-selected {
  background: linear-gradient(90deg, transparent 14px, #d4d4d4 14px);
  font-size: 5px;
}

.mini-list {
  width: 205px;
  border-right: 2px solid #c4c4c4;
}

.mini-actions {
  width: 64px;
  border-right: 1px solid #5c9ad0;
}

.mini-explorer {
  width: 43px;
  margin-bottom: 12px;
  border-right: 1px solid #b0b0b0;
  border-bottom: 1px solid #b0b0b0;
  display: flex;
  flex-direction: column;
  align-items: flex-end;
  justify-content: space-between;
}

.mini-scroll {
  width: 5px;
  height: 106px;
  background: #cdcdcd;
}

.mini-view {
  width: 8px;
  height: 8px;
  margin-right: 8px;
  background: #b9d6ee;
}

.mini-site {
  width: 75px;
  background: #ededed;
}

.mini-card {
  width: 38px;
  height: 86px;
  padding-top: 4px;
  background: #fcfcfc;
  border: 1px solid #e2e2e2;
  border-left: none;
}

.mini-card.short {
  height: 33px;
  margin-bottom: 5px;
  padding-top: 14px;
}

.mini-site p {
  font-size: 5px;
}

.mini-card h3 {
  font-size: 6px;
  line-height: 7px;
  color: #2c6298;
  border-bottom: 1px solid #4c5670;
  padding-bottom: 1px;
  margin-bottom: 9px;
}

.mini-card p.gap {
  margin-top: 6px;
}

.mini-card .rust {
  color: #a85634;
}

.mini-bar {
  width: 4px;
  height: 78px;
  background: #c8c8c8;
}

.mini-bar + .pale {
  margin-right: 1px;
}

.mini-bar {
  height: 404px;
  max-height: 404px;
  align-self: flex-start;
}

.mini-bar:not(.wide) {
  height: 79px;
}

.mini-bar.wide {
  width: 10px;
  height: 112px;
}

.pale {
  width: 59px;
  background: #f5f6f8;
}

.sheet.last {
  width: 41px;
}

/* Paint window */
.paint {
  position: absolute;
  top: 35px;
  right: 10px;
  bottom: 119px;
  left: 9px;
  display: flex;
  flex-direction: column;
  background: #fff;
  border: 1px solid #4a96d6;
  box-shadow: 0 4px 10px rgba(0, 0, 0, 0.35);
}

.titlebar {
  height: 22px;
  display: flex;
  align-items: center;
  gap: 5px;
}

.quick {
  display: flex;
  align-items: center;
  gap: 6px;
  padding-left: 6px;
}

.quick svg {
  width: 11px;
  height: 11px;
}

.quick i, .manager-tools i {
  width: 1px;
  height: 11px;
  background: #aaa;
}

.controls {
  margin-left: auto;
  display: flex;
  gap: 21px;
  padding-right: 12px;
}

.ribbon-tabs {
  height: 17px;
  display: flex;
  line-height: 17px;
  text-align: center;
  border-bottom: 1px solid #dcdddf;
}

.ribbon-tabs a {
  width: 41px;
  height: 17px;
}

.ribbon-tabs .file {
  background: #1473c0;
  color: #fff;
}

.ribbon-tabs .current {
  width: 42px;
  background: #f5f6f7;
  border: 1px solid #dcdddf;
  border-bottom: none;
  line-height: 15px;
}

.ribbon-help {
  margin-left: auto;
  display: flex;
  align-items: center;
  gap: 4px;
  padding-right: 2px;
}

.faint {
  color: #999;
}

/* Ribbon */
.ribbon {
  height: 67px;
  display: flex;
  background: #f5f6f7;
  border-bottom: 1px solid #dcdddf;
  color: #363e4e;
}

.group {
  flex: none;
  display: flex;
  flex-direction: column;
  justify-content: space-between;
  padding: 1px 3px 0;
  margin-top: 2px;
  border-right: 1px solid #e0e1e3;
}

.group h2 {
  text-align: center;
  color: #4e5664;
}

.tools-row {
  display: flex;
  gap: 4px;
}

.big {
  display: flex;
  flex-direction: column;
  align-items: center;
  height: 49px;
  width: 31px;
  padding-top: 2px;
  line-height: 11px;
  white-space: nowrap;
}

.big .caret {
  margin-top: 3px;
}

.pressed {
  background: #cce3f6;
  border: 1px solid #6aaee0;
  padding-top: 1px;
}

.split {
  background: linear-gradient(#cce3f6 27px, #8fc0e6 27px, #8fc0e6 28px, #cce3f6 28px);
}

.big svg {
  margin: 0 0 3px;
}

.big .icon-paste {
  width: 20px;
  height: 24px;
}

.big .icon-select {
  width: 24px;
  height: 20px;
  margin: 3px 0 4px;
}

.big .icon-brush {
  width: 24px;
  height: 24px;
}

.big .icon-med {
  width: 22px;
  height: 22px;
  margin: 1px 0 4px;
}

.stack {
  display: flex;
  flex-direction: column;
}

.stack button {
  height: 16px;
  display: flex;
  align-items: center;
  gap: 3px;
}

button:disabled {
  color: #9298a2;
}

.clipboard {
  width: 79px;
  padding-left: 4px;
}

.image {
  width: 89px;
}

.tools {
  width: 59px;
}

.tool-grid {
  display: grid;
  grid-template-columns: repeat(3, 17px);
  row-gap: 8px;
  padding: 9px 0 0 2px;
}

.brushes {
  width: 41px;
}

.shapes {
  width: 181px;
}

.gallery {
  width: 116px;
  height: 45px;
  display: flex;
  margin: 2px 0 0 2px;
  background: #fff;
  border: 1px solid #dcdfe3;
}

.shape-grid {
  flex: 1;
  display: grid;
  grid-template-columns: repeat(7, 1fr);
  place-items: center;
}

.shape-grid svg {
  stroke: #3f81ba;
  fill: #eef6fd;
}

.gallery-scroll {
  width: 11px;
  border-left: 1px solid #dcdfe3;
  background: #f8f8f9;
  display: flex;
  flex-direction: column;
  align-items: center;
  justify-content: space-around;
}

.gallery-scroll .up {
  color: #aaa;
}

.size {
  width: 38px;
}

.colors {
  width: 262px;
}

.colors .tools-row {
  gap: 0;
}

.chip {
  width: 24px;
  height: 24px;
  margin: 1px 0 2px;
  border: 1px solid #7f8a9a;
  background: #06080e;
  box-shadow: inset 0 0 0 1px #cce3f6;
}

.chip.white {
  width: 18px;
  height: 18px;
  margin: 3px 0 6px;
  background: #fff;
  box-shadow: none;
}

.swatches {
  display: grid;
  grid-template-columns: repeat(10, 15px);
  grid-template-rows: repeat(3, 15px);
  gap: 1px;
  margin: 1px 1px 0 0;
}

.swatches button {
  border: 1px solid #b4b4b4;
  box-shadow: inset 0 0 0 1px #f5f6f7;
}

.paint3d {
  width: 45px;
}

.alert {
  width: 41px;
}

.paint3d .big, .alert .big {
  width: 100%;
}

/* Canvas */
.workspace {
  flex: 1;
  min-height: 0;
  display: flex;
  background: #c9d2e0;
}

.canvas {
  flex: 1;
  position: relative;
  margin: 4px 0 0 4px;
  border-top: 1px dashed #3b8fd6;
  border-left: 1px dashed #3b8fd6;
  overflow: hidden;
}

.handle {
  position: absolute;
  z-index: 5;
  width: 4px;
  height: 4px;
  background: #fff;
  border: 1px solid #444;
}

.handle.corner {
  top: 0;
  left: 0;
}

.handle.middle {
  top: 0;
  left: 52%;
}

.vertical .thumb {
  height: 91px;
}

.horizontal {
  width: 100%;
  height: 12px;
  flex-direction: row;
  padding-right: 12px;
}

.horizontal .track {
  height: 10px;
}

.horizontal .thumb {
  width: 96%;
  height: 10px;
}

.pasted-browser {
  height: 100%;
  display: flex;
  flex-direction: column;
  align-items: stretch;
  background: #ededed;
}

.pasted-top {
  height: 43px;
  background: #1f2142;
}

.pasted-top .browser-controls, .pasted-tabs {
  justify-content: flex-end;
}

.pasted-top .browser-controls {
  padding-right: 6px;
}

.pasted-tabs {
  display: flex;
  margin-right: -15px;
  padding-top: 6px;
}

.pasted-tabs .tab {
  flex: none;
  width: 61px;
}

.pasted-bar {
  height: 30px;
  background: #f9f9fa;
  border-bottom: 1px solid #ddd;
  display: flex;
  align-items: center;
  justify-content: flex-end;
  gap: 10px;
}

.pasted-bar .url {
  height: 21px;
  width: 60px;
  margin-right: 83px;
  border: 1px solid #c4c4c4;
  background: #fff;
  text-align: right;
  font-size: 12px;
  line-height: 19px;
}

.pasted-bar svg:last-child {
  margin-right: -3px;
}

.pasted-head {
  height: 38px;
  background: #fff;
  border-bottom: 1px solid #d6d6d6;
  display: flex;
  align-items: center;
  justify-content: flex-end;
  padding-right: 57px;
  font-size: 10px;
  font-weight: bold;
}

.pasted-head svg {
  margin-left: 20px;
  transform: scaleX(-1);
}

.pasted-page {
  flex: 1;
  padding: 14px 50px 0 0;
  display: flex;
  justify-content: flex-end;
}

.pasted-card {
  width: 103px;
  padding: 15px 7px 0 21px;
  background: #fcfcfc;
}

.pasted-card h3 {
  font-weight: bold;
  color: #3c6690;
  border-bottom: 2px solid #4c678a;
  line-height: 12px;
  margin: 0 0 37px -21px;
  padding: 0 0 5px 9px;
  font-size: 10px;
}

.pasted-card p {
  font-size: 10px;
  line-height: 15px;
  color: #b15c38;
}

.pasted-explorer {
  position: absolute;
  top: 0;
  bottom: 0;
  left: 6px;
  width: 823px;
  display: flex;
  flex-direction: column;
  background: #fff;
  box-shadow: 0 0 8px rgba(0, 0, 0, 0.4);
}

.explorer-top {
  height: 20px;
  display: flex;
  color: #888;
}

.manage {
  width: 63px;
  height: 10px;
  margin: 2px 11px 0 169px;
  background: #ecbfae;
}

.path {
  padding-top: 3px;
}

.explorer-top .controls {
  padding: 4px 11px 0 0;
}

.explorer-tabs {
  height: 19px;
  display: flex;
  border-bottom: 1px solid #ddd;
}

.explorer-tabs .file {
  width: 30px;
  height: 17px;
  margin-top: 2px;
  background: #1473c0;
}

.explorer-ribbon {
  height: 67px;
  background: #f5f6f7;
  border-bottom: 1px solid #ddd;
}

.explorer-address {
  height: 26px;
  padding: 5px 9px 5px;
  display: flex;
  justify-content: flex-end;
  color: #7a7a7a;
}

.explorer-address label {
  display: flex;
  align-items: center;
  gap: 17px;
  padding: 0 4px;
  border: 1px solid #ddd;
}

.explorer-body {
  flex: 1;
  display: flex;
  justify-content: flex-end;
}

.explorer-body .thumb {
  flex: 1;
}

/* Computer Management */
.manager {
  position: absolute;
  top: 8px;
  left: 16px;
  width: 722px;
  height: 260px;
  display: flex;
  flex-direction: column;
  background: #f0f0f0;
  border: 1px solid #4a96d6;
  box-shadow: 2px 0 9px rgba(0, 0, 0, 0.35);
}

.manager .titlebar {
  background: #fff;
  padding-left: 5px;
  gap: 4px;
}

.manager .controls {
  padding-right: 11px;
}

.manager-menu {
  height: 18px;
  display: flex;
  gap: 12px;
  padding: 3px 7px;
  background: #fff;
  border-bottom: 1px solid #e4e4e4;
}

.manager-tools {
  height: 18px;
  display: flex;
  align-items: center;
  background: #fff;
  border-bottom: 1px solid #d8d8d8;
}

.manager-tools button {
  width: 17px;
  height: 16px;
  display: grid;
  place-items: center;
}

.manager-tools i {
  margin: 0 2px;
}

.manager-tools .on {
  background: #cfe4f6;
}

.panes {
  flex: 1;
  display: flex;
  gap: 2px;
  padding-top: 3px;
}

.tree, .list, .actions {
  background: #fff;
  border: 1px solid #9a9a9a;
}

.tree {
  width: 139px;
  border-left: none;
  overflow: hidden;
}

.tree li {
  height: 13px;
  display: flex;
  align-items: center;
  gap: 3px;
  padding-left: 3px;
  white-space: nowrap;
}

.tree .child {
  padding-left: 17px;
}

.tree .arrow {
  width: 11px;
  margin-right: 1px;
}

.tree .grey {
  color: #999;
}

.tree .selected {
  background: linear-gradient(90deg, transparent 30px, #d9d9d9 30px);
}

.list {
  flex: 1;
}

.list-head {
  width: 92px;
  height: 18px;
  padding: 3px 0 0 5px;
  border-right: 1px solid #e4e4e4;
}

.list-row {
  display: flex;
  align-items: center;
  gap: 2px;
  padding-left: 3px;
}

.actions {
  width: 139px;
  border-right: none;
  border-top-color: #68727f;
  white-space: nowrap;
}

.actions h2 {
  height: 17px;
  padding: 2px 4px;
  font-weight: bold;
  background: #f0f0f0;
}

.action-title {
  height: 17px;
  display: flex;
  align-items: center;
  justify-content: space-between;
  padding: 0 6px 0 5px;
  background: linear-gradient(#bdd3e9, #9bb9d8);
  color: #1b3350;
}

.action-title .caret {
  width: 7px;
  height: 4px;
  color: #000;
}

.actions a {
  display: flex;
  align-items: center;
  justify-content: space-between;
  padding: 3px 7px 0 23px;
}

/* Status bar */
.status {
  height: 20px;
  display: flex;
  background: #f0f0f0;
  border-top: 1px solid #dcdcdc;
}

.cell {
  width: 114px;
  display: flex;
  align-items: center;
  gap: 3px;
  padding-left: 2px;
  border-right: 1px solid #dadada;
}

.zoom {
  margin-left: auto;
  width: 161px;
  padding: 0 17px 0 16px;
  display: flex;
  align-items: center;
  gap: 4px;
  border-left: 1px solid #dadada;
}

.zoom button:last-child {
  margin-left: 2px;
}

.zoom input {
  appearance: none;
  flex: 1;
  min-width: 0;
  height: 4px;
  margin: 0 2px;
  background: #dcdcdc;
}

.zoom input::-webkit-slider-thumb {
  appearance: none;
  width: 7px;
  height: 12px;
  background: #1275c4;
  clip-path: polygon(0 0, 100% 0, 100% 75%, 50% 100%, 0 75%);
}

/* Taskbar */
.taskbar {
  height: 29px;
  display: flex;
  background: #333;
  border-left: 2px solid #05060e;
  color: #fff;
}

.start {
  width: 35px;
  display: grid;
  place-items: center;
  background: #1f2142;
}

.search {
  width: 252px;
  display: flex;
  align-items: center;
  gap: 7px;
  padding: 0 9px 0 7px;
  background: #f2f2f2;
  border-top: 1px solid #c8c8c8;
}

.search svg {
  height: 14px;
}

.cortana {
  width: 16px;
  height: 16px;
  border: 2px solid #10131f;
  border-radius: 50%;
}

.search input {
  flex: 1;
  min-width: 0;
  padding: 0;
  border: none;
  background: none;
  font: 11px Lato, "Open Sans", sans-serif;
}

.search input::placeholder {
  color: #333;
}

.apps {
  display: flex;
  padding-left: 2px;
}

.apps button {
  width: 36px;
  display: flex;
  align-items: center;
  justify-content: center;
  position: relative;
}

.apps svg {
  width: 17px;
  height: 17px;
}

.open {
  background: linear-gradient(#76b9ed, #76b9ed) center bottom / 30px 2px no-repeat;
}

.apps .active {
  background-color: #6c686a;
  background-size: 36px 2px;
}

.badge {
  position: absolute;
  right: 2px;
  bottom: 3px;
  padding: 0 3px;
  border: 1px solid #999;
  border-radius: 7px;
  background: #333;
  font-size: 8px;
  line-height: 10px;
  font-weight: bold;
}

.tray {
  flex: 1;
  display: flex;
  align-items: center;
  justify-content: flex-end;
  padding-right: 8px;
  background: linear-gradient(90deg, #333 35%, #23244a 55%, #080a12 75%);
}

.desk {
  color: #c8c8c8;
}

.more {
  align-self: flex-start;
  margin: 0 15px 0 6px;
  font-size: 12px;
}

.people {
  margin-right: 18px;
}

.tray > svg + svg {
  margin-right: 11px;
}

.clock {
  text-align: center;
  line-height: 13px;
}

.notes {
  position: relative;
  margin-left: 12px;
  padding-right: 6px;
}

.notes span {
  position: absolute;
  right: 0;
  bottom: -5px;
  width: 11px;
  height: 11px;
  border: 1px solid #888;
  border-radius: 50%;
  background: #23263a;
  font-size: 8px;
  line-height: 9px;
  text-align: center;
}
```
